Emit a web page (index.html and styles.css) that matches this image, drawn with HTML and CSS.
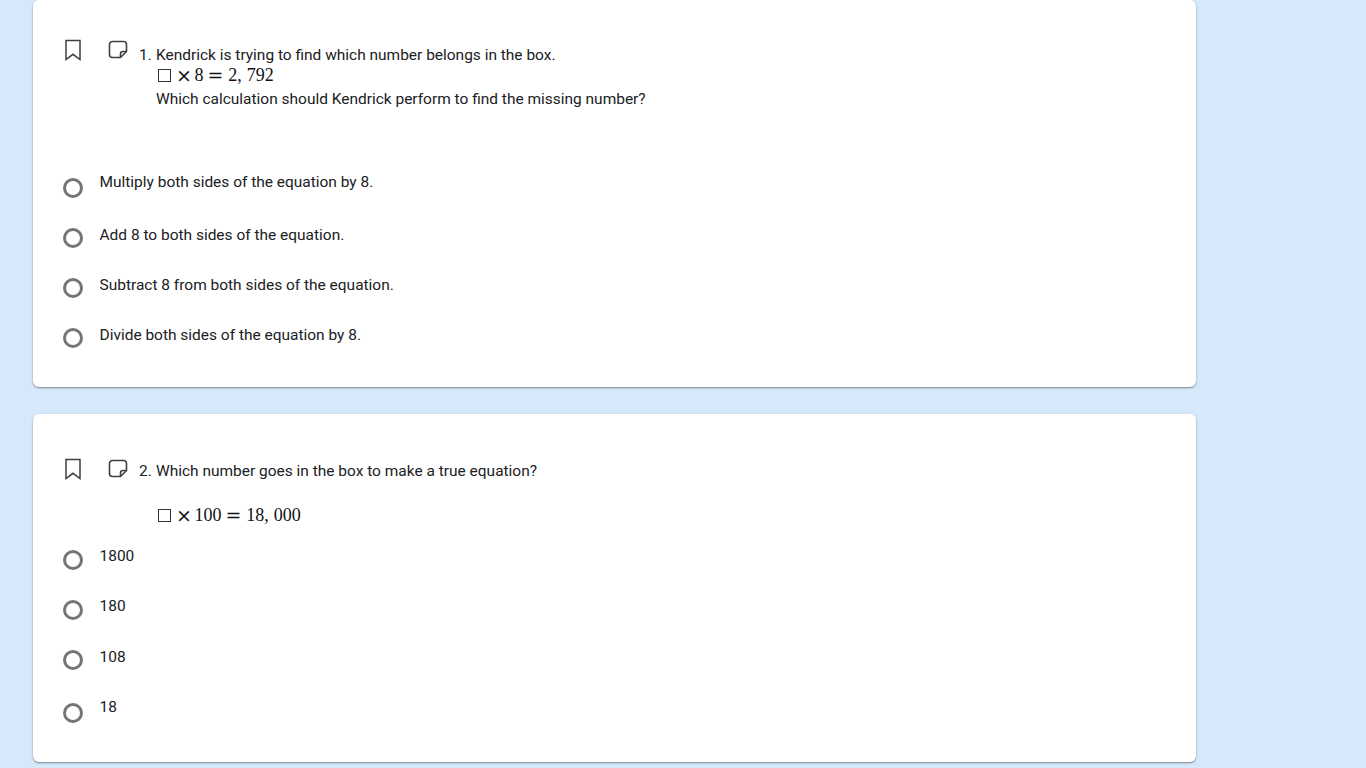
FILE: index.html
```html
<!DOCTYPE html>
<html lang="en">
<head>
  <meta charset="UTF-8">
  <meta name="viewport" content="width=device-width, initial-scale=1.0">
  <title>Assessment</title>
  <link rel="stylesheet" href="styles.css">
</head>
<body>

  <main class="page">
    <section class="card card-first">
      <div class="question">
        <svg class="icon bookmark" viewBox="0 0 18 22" width="18" height="22"><path d="M2 1.5h14v19l-7-5.2-7 5.2z"/></svg>
        <svg class="icon note" viewBox="0 0 20 20" width="20" height="20"><path d="M18.5 11.5v-7a3 3 0 0 0-3-3h-11a3 3 0 0 0-3 3v10a3 3 0 0 0 3 3h8z"/><path d="M12.5 17.5v-3.5a2.5 2.5 0 0 1 2.5-2.5h3.5"/></svg>
        <div class="question-text">
          <p class="line line-first"><span class="num">1.</span>Kendrick is trying to find which number belongs in the box.</p>
          <p class="math math-tight"><span class="box"></span><span class="op op-times">×</span>8<span class="op">=</span>2,<span class="gap"></span>792</p>
          <p class="line line-third">Which calculation should Kendrick perform to find the missing number?</p>
        </div>
      </div>
      <ul class="options options-first">
        <li class="option option-tall"><span class="radio"></span><span>Multiply both sides of the equation by 8.</span></li>
        <li class="option"><span class="radio"></span><span>Add 8 to both sides of the equation.</span></li>
        <li class="option"><span class="radio"></span><span>Subtract 8 from both sides of the equation.</span></li>
        <li class="option"><span class="radio"></span><span>Divide both sides of the equation by 8.</span></li>
      </ul>
    </section>

    <section class="card card-second">
      <div class="question">
        <svg class="icon bookmark" viewBox="0 0 18 22" width="18" height="22"><path d="M2 1.5h14v19l-7-5.2-7 5.2z"/></svg>
        <svg class="icon note" viewBox="0 0 20 20" width="20" height="20"><path d="M18.5 11.5v-7a3 3 0 0 0-3-3h-11a3 3 0 0 0-3 3v10a3 3 0 0 0 3 3h8z"/><path d="M12.5 17.5v-3.5a2.5 2.5 0 0 1 2.5-2.5h3.5"/></svg>
        <div class="question-text">
          <p class="line line-second"><span class="num">2.</span>Which number goes in the box to make a true equation?</p>
          <p class="math math-loose"><span class="box"></span><span class="op op-times">×</span>100<span class="op">=</span>18,<span class="gap"></span>000</p>
        </div>
      </div>
      <ul class="options options-second">
        <li class="option"><span class="radio"></span><span>1800</span></li>
        <li class="option"><span class="radio"></span><span>180</span></li>
        <li class="option"><span class="radio"></span><span>108</span></li>
        <li class="option option-last"><span class="radio"></span><span>18</span></li>
      </ul>
    </section>
  </main>

</body>
</html>
```

FILE: styles.css
```css
html, body {
  height: 100%;
  overflow: hidden;
}
body {
  margin: 0;
  padding: 0;
  font-family: 'Roboto', 'Liberation Sans', sans-serif;
  font-size: 15.47px;
  background-color: #d6e9fb;
  color: #202124;
}
p {
  margin: 0;
}
.page {
  width: 1163px;
  margin-left: 33px;
}
.card {
  background-color: #ffffff;
  border-radius: 6px;
  box-shadow: 0 1px 2px rgba(60, 64, 67, 0.6);
  box-sizing: border-box;
  padding-left: 30px;
}
.card-first {
  height: 387px;
  padding-top: 39px;
  margin-bottom: 27px;
}
.card-second {
  height: 348px;
  padding-top: 44px;
}
.question {
  display: flex;
  align-items: flex-start;
}
.icon {
  flex: none;
  fill: none;
  stroke: #3c4043;
  stroke-width: 1.5;
}
.bookmark {
  margin-left: 1px;
}
.note {
  margin-top: 1px;
  margin-left: 25.5px;
  stroke-width: 1.6;
}
.question-text {
  margin-left: 11.5px;
  padding-left: 17px;
}
.line {
  line-height: 22px;
}
.line-first {
  margin-top: 5px;
}
.line-second {
  margin-top: 2px;
}
.line-third {
  margin-top: 1px;
}
.num {
  margin-left: -17px;
  display: inline-block;
  width: 17px;
}
.math {
  display: flex;
  align-items: center;
  font-family: 'Liberation Serif', serif;
  font-size: 18px;
  line-height: 24px;
  color: #111111;
  margin-left: 2px;
}
.math-tight {
  margin-top: -3px;
}
.math-loose {
  margin-top: 21px;
}
.box {
  flex: none;
  box-sizing: border-box;
  width: 13px;
  height: 13px;
  border: 1px solid #333333;
  margin-right: 5px;
}
.op {
  font-family: 'DejaVu Serif', serif;
  font-size: 19px;
  margin-left: 4px;
  margin-right: 5px;
}
.op-times {
  margin-left: 0;
  margin-right: 2.5px;
}
.gap {
  width: 5px;
}
.options {
  list-style: none;
  margin: 0;
  padding: 0;
}
.options-first {
  margin-top: 61px;
}
.options-second {
  margin-top: 18px;
}
.option {
  display: flex;
  height: 50.3px;
  align-items: flex-start;
  line-height: 22px;
}
.options-first .option {
  height: 50px;
}
.radio {
  flex: none;
  box-sizing: border-box;
  width: 20px;
  height: 20px;
  margin-top: 4px;
  margin-right: 16.5px;
  border: 3px solid #757575;
  border-radius: 50%;
}
.options-second .radio {
  margin-top: 4.5px;
}
.options-first .option-tall {
  height: 53px;
}
.options-first .option-tall .radio {
  margin-top: 7px;
}
.options-second .option-last .radio {
  margin-top: 7.5px;
}
```
